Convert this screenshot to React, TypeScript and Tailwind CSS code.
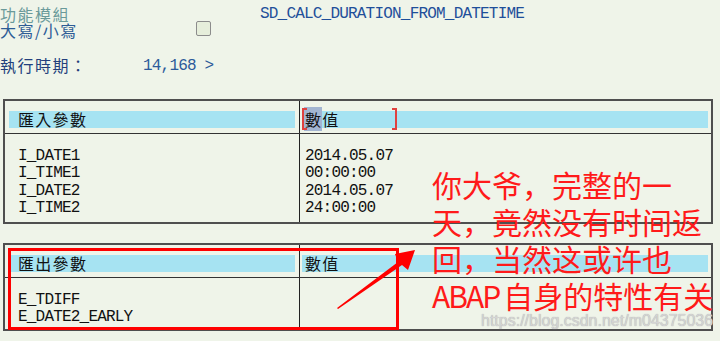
import React from "react";

type Row = { name: string; value: string };

function ParamTable({
  title,
  rows,
  bodyH,
  highlight,
}: {
  title: string;
  rows: Row[];
  bodyH: string;
  highlight?: boolean;
}) {
  return (
    <div className="ml-[3px] w-[710px] border-2 border-[#4f4f4f]">
      <div className="flex h-[33px] border-b border-[#333]">
        <div className="w-[295px] border-r border-[#222] pt-[10px]">
          <div className="mx-[4px] h-[17px] bg-[#a6e3f2] pl-[9px] text-[16px] leading-[17px] tracking-[1.3px] text-[#111] font-['Noto_Sans_CJK_TC','Noto_Sans_CJK_SC',sans-serif]">
            {title}
          </div>
        </div>
        <div className="relative flex-1 pt-[10px]">
          <div className="ml-[2px] mr-[3px] h-[17px] bg-[#a6e3f2] pl-[2px] text-[16px] leading-[17px] tracking-[1.3px] text-[#111] font-['Noto_Sans_CJK_TC','Noto_Sans_CJK_SC',sans-serif]">
            {highlight ? (
              <>
                <span className="bg-[#a3b5d1] pl-[1px]">數</span>值
              </>
            ) : (
              <span className="pl-[1px]">數值</span>
            )}
          </div>
          {highlight && (
            <div className="absolute left-[2px] top-[7px] h-[22px] w-[95px]">
              <div className="absolute left-0 top-0 h-full w-[5px] border-y-2 border-l-2 border-[#e0413f]" />
              <div className="absolute right-0 top-0 h-full w-[5px] border-y-2 border-r-2 border-[#e0413f]" />
            </div>
          )}
        </div>
      </div>
      <div className={`flex ${bodyH}`}>
        <div className="w-[295px] border-r border-[#222] pl-[13px] pt-[13.5px] text-[16px] leading-[17.6px] tracking-[-0.8px] text-[#111] font-['Liberation_Mono',monospace]">
          {rows.map((r) => (
            <div key={r.name}>{r.name}</div>
          ))}
        </div>
        <div className="flex-1 pl-[5px] pt-[13.5px] text-[16px] leading-[17.6px] tracking-[-0.8px] text-[#111] font-['Liberation_Mono',monospace]">
          {rows.map((r) => (
            <div key={r.name} className="h-[17.6px]">
              {r.value}
            </div>
          ))}
        </div>
      </div>
    </div>
  );
}

export default function App() {
  return (
    <div className="relative h-[341px] w-[720px] overflow-hidden bg-[#eff4e9]">
      <div className="-mt-[20px] h-[16px] text-[16px] leading-[16px] tracking-[1.5px] text-[#6a9a9a] font-['Noto_Sans_CJK_TC',sans-serif]">
        功能模組名稱
      </div>
      <div className="mt-[9.5px] flex h-[16px] items-start">
        <div className="w-[260px] text-[16px] leading-[16px] tracking-[1.5px] text-[#6a9a9a] font-['Noto_Sans_CJK_TC',sans-serif]">
          功能模組
        </div>
        <div className="text-[16px] leading-[16px] tracking-[-0.8px] text-[#1f4f9a] font-['Liberation_Mono',monospace]">
          SD_CALC_DURATION_FROM_DATETIME
        </div>
      </div>
      <div className="flex h-[16px] items-start">
        <div className="w-[196px] text-[16px] leading-[16px] tracking-[1.5px] text-[#2d5c96] font-['Noto_Sans_CJK_TC',sans-serif]">
          大寫/小寫
        </div>
        <div className="-mt-[0.5px] h-[15px] w-[15px] rounded-[2px] border border-[#8c8c8c] bg-[#e6eedb]" />
      </div>
      <div className="mt-[19px] flex h-[16px] items-start">
        <div className="w-[143px] text-[16px] leading-[16px] tracking-[1.5px] text-[#233f7c] font-['Noto_Sans_CJK_TC',sans-serif]">
          執行時期：
        </div>
        <div className="pt-[1px] text-[16px] leading-[16px] tracking-[-0.8px] text-[#2c5a9a] font-['Liberation_Mono',monospace]">
          14,168 &gt;
        </div>
      </div>

      <div className="mt-[26.5px]">
        <ParamTable
          title="匯入參數"
          highlight
          bodyH="h-[88px]"
          rows={[
            { name: "I_DATE1", value: "2014.05.07" },
            { name: "I_TIME1", value: "00:00:00" },
            { name: "I_DATE2", value: "2014.05.07" },
            { name: "I_TIME2", value: "24:00:00" },
          ]}
        />
      </div>
      <div className="mt-[19px]">
        <ParamTable
          title="匯出參數"
          bodyH="h-[51px]"
          rows={[
            { name: "E_TDIFF", value: "" },
            { name: "E_DATE2_EARLY", value: "" },
          ]}
        />
      </div>

      {/* red highlight box */}
      <div className="absolute left-[8px] top-[248px] h-[82px] w-[391px] border-[3px] border-[#ff0000]" />

      {/* arrow */}
      <svg
        className="pointer-events-none absolute left-0 top-0"
        width="720"
        height="341"
        viewBox="0 0 720 341"
      >
        <polygon
          points="337,308 398,262 395,254 415,250 408,270 402,265 338,309"
          fill="#ff0000"
        />
      </svg>

      {/* annotation */}
      <div className="absolute left-[432px] top-[166px] text-[30px] leading-[37px] text-[#ff1a1a] font-['Noto_Sans_CJK_SC',sans-serif]">
        <div>你大爷，完整的一</div>
        <div>天，竟然没有时间返</div>
        <div>回，当然这或许也</div>
        <div>
          <span className="tracking-[-2px] pr-[4px]">ABAP</span>自身的特性有关
        </div>
      </div>

      {/* watermark */}
      <div className="absolute left-[481px] top-[312px] text-[16px] leading-[18px] text-[#d4d4d4] [text-shadow:0_0_1px_#a0a0a0] font-['Liberation_Sans',sans-serif]">
        https://blog.csdn.net/m04375036
      </div>
    </div>
  );
}
